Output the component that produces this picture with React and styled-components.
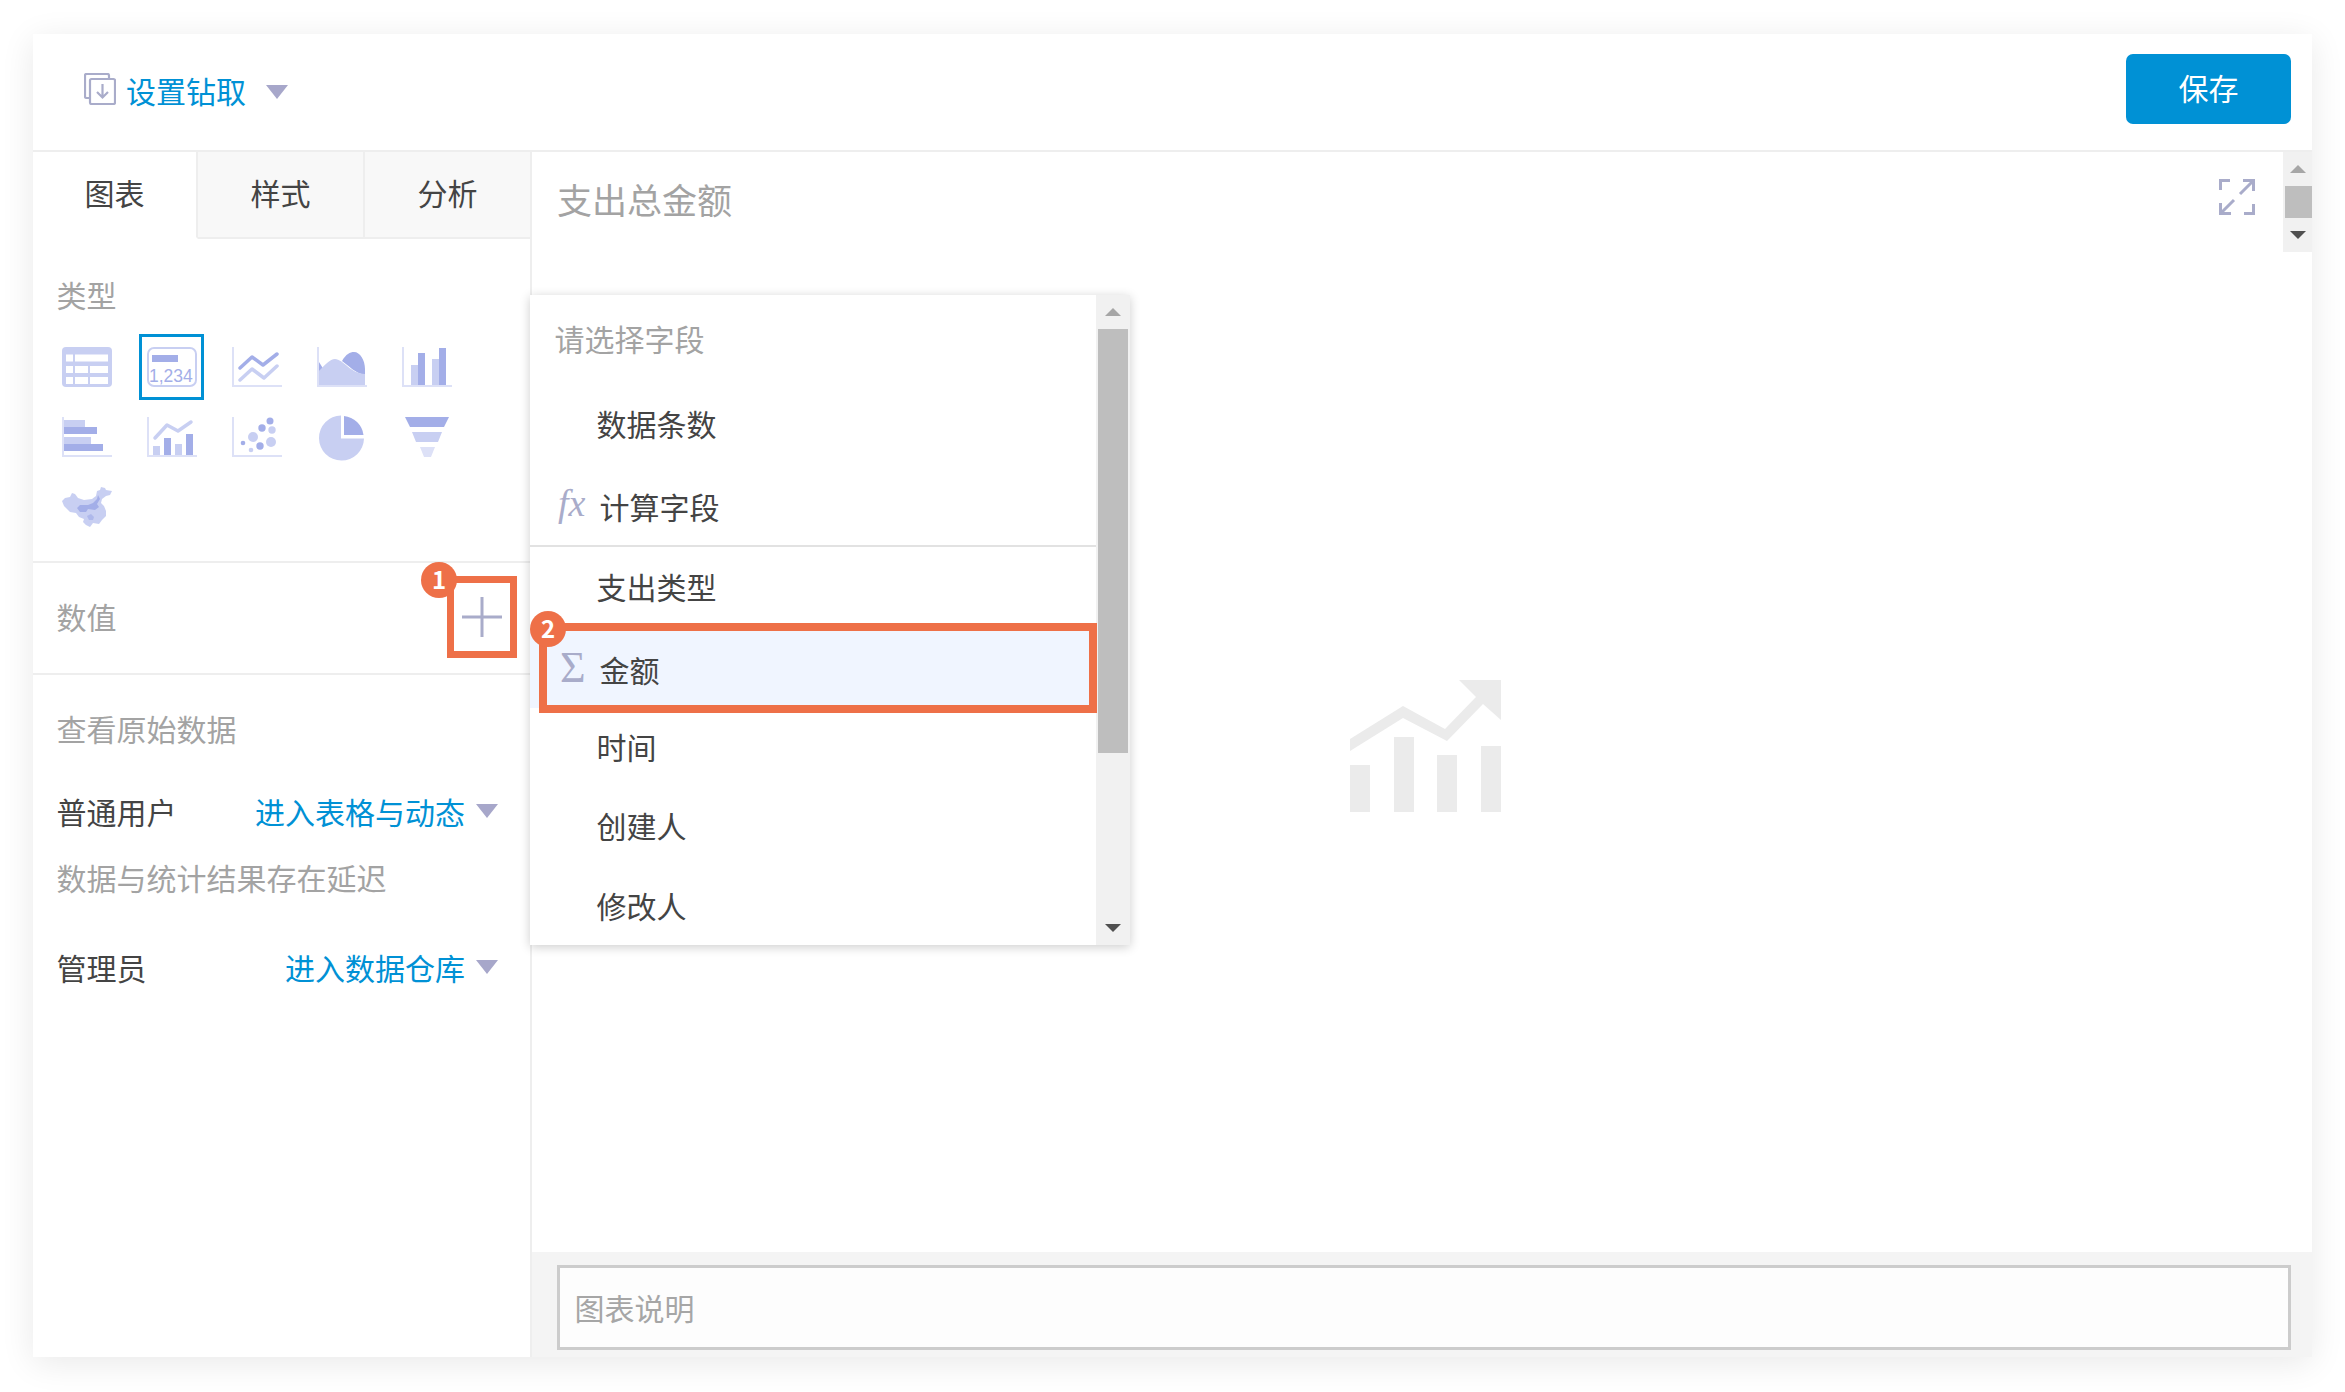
import styled, { createGlobalStyle } from "styled-components"

const GlobalStyle = createGlobalStyle`
  html, body {
    margin: 0;
    padding: 0;
    background: #fff;
  }
  * {
    box-sizing: border-box;
  }
`

const LIGHT = "#c8cff2"
const DARK = "#a3aee8"
const AXIS = "#dde1f7"
const ORANGE = "#ee7048"
const BLUE = "#0091d5"

const Page = styled.div`
  width: 2345px;
  height: 1392px;
  padding: 34px 33px;
  font-family: "Noto Sans CJK SC", "Liberation Sans", sans-serif;
  font-size: 30px;
  color: #444;
`

const Card = styled.div`
  width: 2279px;
  height: 1323px;
  display: flex;
  flex-direction: column;
  background: #fff;
  box-shadow: 0 6px 32px rgba(0, 0, 0, 0.09);
`

const Header = styled.header`
  height: 118px;
  flex: none;
  display: flex;
  align-items: center;
  padding: 0 21px 0 51px;
  border-bottom: 2px solid #eee;
`

const DrillLink = styled.div`
  display: flex;
  align-items: center;
  margin-top: -5px;
  color: ${BLUE};
  line-height: 40px;
`

const DrillIcon = styled.svg`
  width: 32px;
  height: 32px;
  margin: -1px 10px 0 0;
`

const Caret = styled.span`
  display: inline-block;
  width: 0;
  height: 0;
  margin-left: ${(p) => p.$gap || 0}px;
  border-left: 11px solid transparent;
  border-right: 11px solid transparent;
  border-top: 14px solid #a7a7ca;
`

const DrillCaret = styled(Caret)`
  margin-top: 5px;
`

const SaveButton = styled.button`
  width: 165px;
  height: 70px;
  margin: 0 0 6px auto;
  background: ${BLUE};
  color: #fff;
  border: none;
  border-radius: 7px;
  font: inherit;
  padding: 0 0 5px;
`

const Body = styled.div`
  flex: 1;
  min-height: 0;
  display: flex;
`

const Sidebar = styled.aside`
  width: 499px;
  flex: none;
  border-right: 2px solid #eee;
`

const Tabs = styled.div`
  display: flex;
  height: 87px;
`

const Tab = styled.div`
  width: ${(p) => p.$width}px;
  display: flex;
  align-items: center;
  justify-content: center;
  padding-bottom: 5px;
  background: ${(p) => (p.$active ? "#fff" : "#f8f8f8")};
  border-right: 2px solid #eee;
  border-bottom: 2px solid ${(p) => (p.$active ? "#fff" : "#eee")};
  &:last-child {
    border-right: none;
  }
`

const TypeSection = styled.section`
  padding: 40px 0 21px 21px;
  border-bottom: 2px solid #eee;
`

const Label = styled.div`
  color: #a3a3a3;
  line-height: 30px;
  margin-left: 2.5px;
`

const TypeGrid = styled.div`
  display: grid;
  grid-template-columns: repeat(5, 65px);
  grid-auto-rows: 66px;
  gap: 4px 20px;
  margin-top: 25px;
`

const TypeCell = styled.div`
  display: flex;
  align-items: center;
  justify-content: center;
  border: 3px solid ${(p) => (p.$selected ? BLUE : "transparent")};
  svg {
    width: 50px;
    height: 40px;
    flex: none;
  }
`

const ValueRow = styled.section`
  height: 112px;
  display: flex;
  align-items: center;
  justify-content: space-between;
  padding: 0 13px 2px 23.5px;
  border-bottom: 2px solid #eee;
  color: #a3a3a3;
`

const ValueLabel = styled.span`
  margin-top: -3px;
`

const PlusBox = styled.div`
  position: relative;
  width: 70px;
  height: 82px;
  display: flex;
  align-items: center;
  justify-content: center;
  border: 7px solid ${ORANGE};
  svg {
    width: 42px;
    height: 42px;
  }
`

const Badge = styled.span`
  position: absolute;
  left: ${(p) => p.$left}px;
  top: ${(p) => p.$top}px;
  width: 36px;
  height: 36px;
  border-radius: 50%;
  background: ${ORANGE};
  color: #fff;
  font-size: 24px;
  font-weight: 700;
  line-height: 34px;
  text-align: center;
  z-index: 2;
`

const DataSection = styled.section`
  padding: 33px 32px 0 23.5px;
`

const Line = styled.div`
  display: flex;
  align-items: center;
  justify-content: space-between;
  line-height: 40px;
  margin-top: ${(p) => p.$top || 0}px;
  color: ${(p) => (p.$muted ? "#a3a3a3" : "#444")};
`

const LinkGroup = styled.div`
  display: flex;
  align-items: center;
  color: ${BLUE};
`

const Main = styled.main`
  position: relative;
  flex: 1;
  min-width: 0;
  display: flex;
  flex-direction: column;
`

const TitleRow = styled.div`
  height: 100px;
  flex: none;
  display: flex;
  align-items: flex-start;
  padding-left: 25px;
`

const Title = styled.h2`
  margin: 25px 0 0;
  font-size: 35px;
  font-weight: 400;
  line-height: 44px;
  color: #a3a3a3;
`

const ExpandIcon = styled.svg`
  width: 36px;
  height: 36px;
  margin: 27px 28px 0 auto;
`

const Track = styled.div`
  width: ${(p) => p.$width}px;
  align-self: stretch;
  flex: none;
  display: flex;
  flex-direction: column;
  background: #f1f1f1;
`

const ArrowCell = styled.div`
  height: 34px;
  flex: none;
  display: flex;
  align-items: center;
  justify-content: center;
  margin-top: ${(p) => (p.$end ? "auto" : 0)};
`

const Arrow = styled.span`
  width: 0;
  height: 0;
  border-left: 8px solid transparent;
  border-right: 8px solid transparent;
  border-bottom: ${(p) => (p.$down ? "none" : "8px solid #a6a6a6")};
  border-top: ${(p) => (p.$down ? "8px solid #505050" : "none")};
`

const Thumb = styled.div`
  height: ${(p) => p.$height}px;
  flex: none;
  margin: ${(p) => p.$margin};
  background: #bebebe;
`

const ChartArea = styled.div`
  flex: 1;
  min-height: 0;
  display: flex;
  align-items: center;
  justify-content: center;
  padding: 0 2px 12px 9px;
`

const EmptyChart = styled.svg`
  width: 151px;
  height: 132px;
`

const Footer = styled.div`
  height: 105px;
  flex: none;
  padding: 13px 21px 7px 25px;
  background: #f4f4f4;
`

const CaptionInput = styled.div`
  height: 85px;
  display: flex;
  align-items: center;
  padding: 0 0 2px 14.5px;
  background: #fdfdfd;
  border: 3px solid #ccc;
  color: #a6a6a6;
`

const Menu = styled.div`
  position: absolute;
  left: -2px;
  top: 143px;
  width: 600px;
  height: 650px;
  display: flex;
  background: #fff;
  box-shadow: 0 2px 10px rgba(0, 0, 0, 0.2);
  z-index: 3;
`

const MenuList = styled.div`
  flex: 1;
  min-width: 0;
`

const MenuHint = styled.div`
  height: 90px;
  padding: 0 0 4px 24.5px;
  display: flex;
  align-items: center;
  color: #a3a3a3;
`

const MenuItem = styled.div`
  position: relative;
  height: ${(p) => p.$height}px;
  display: flex;
  align-items: center;
  padding: ${(p) => (p.$hasIcon ? "3px 0 0 28px" : "0 0 2px 66.5px")};
  background: ${(p) => (p.$active ? "#f0f5ff" : "transparent")};
  border-bottom: ${(p) => (p.$split ? "2px solid #e2e2e2" : "none")};
`

const ItemGlyph = styled.span`
  width: 41.5px;
  flex: none;
  padding-left: ${(p) => p.$indent || 0}px;
  font-family: "Liberation Serif", serif;
  font-style: ${(p) => (p.$italic ? "italic" : "normal")};
  font-size: ${(p) => p.$size}px;
  line-height: 30px;
  margin-top: ${(p) => p.$top}px;
  color: #a9acca;
`

const HighlightBox = styled.div`
  position: absolute;
  left: 9px;
  right: -1px;
  top: -4px;
  bottom: -5px;
  border: 8px solid ${ORANGE};
`

const TableIcon = () => (
  <svg viewBox="0 0 50 40">
    <rect width="50" height="40" rx="4" fill={LIGHT} />
    {[8, 20, 31].map((y, r) => (
      <g key={y} fill="#fff">
        {r === 0 ? (
          <>
            <rect x="4" y={y - 0.5} width="7" height="7" />
            <rect x="13" y={y - 0.5} width="33" height="7" />
          </>
        ) : (
          <>
            <rect x="4" y={y - 1} width="7" height="7" />
            <rect x="13" y={y - 1} width="13" height="7" />
            <rect x="28" y={y - 1} width="18" height="7" />
          </>
        )}
      </g>
    ))}
  </svg>
)

const NumberIcon = () => (
  <svg viewBox="0 0 50 40">
    <rect x="1" y="1" width="48" height="38" rx="6" fill="none" stroke={LIGHT} strokeWidth="2" />
    <rect x="5" y="8" width="26" height="7" fill={DARK} />
    <text x="2" y="35" fontFamily="Liberation Sans, sans-serif" fontSize="17.5" fill={DARK}>1,234</text>
  </svg>
)

const Axis = () => <path d="M1 0V39H50" fill="none" stroke={AXIS} strokeWidth="2" />

const LineIcon = () => (
  <svg viewBox="0 0 50 40">
    <Axis />
    <path d="M8 21L20 10L31 18L45 7" fill="none" stroke={DARK} strokeWidth="3.5" strokeLinecap="round" strokeLinejoin="round" />
    <path d="M8 33L20 22L32 31L45 19" fill="none" stroke={LIGHT} strokeWidth="3.5" strokeLinecap="round" strokeLinejoin="round" />
  </svg>
)

const AreaIcon = () => (
  <svg viewBox="0 0 50 40">
    <Axis />
    <path d="M2 15L7 23L2 24Z" fill={DARK} />
    <path d="M25 14C29 7 33 5 37 5C43 5 48 13 48 22V28C38 26 32 19 25 14Z" fill={DARK} />
    <path d="M2 24C8 18 13 12 18 12C26 12 34 27 48 27V38H2Z" fill={LIGHT} />
  </svg>
)

const BarIcon = () => (
  <svg viewBox="0 0 50 40">
    <Axis />
    <rect x="9" y="18" width="7" height="20" fill={LIGHT} />
    <rect x="16" y="6" width="7" height="32" fill={DARK} />
    <rect x="30" y="12" width="7" height="26" fill={LIGHT} />
    <rect x="37" y="1" width="7" height="37" fill={DARK} />
  </svg>
)

const HBarIcon = () => (
  <svg viewBox="0 0 50 40">
    <Axis />
    <rect x="2" y="3" width="21" height="7" fill={LIGHT} />
    <rect x="2" y="10" width="33" height="7" fill={DARK} />
    <rect x="2" y="20" width="27" height="7" fill={LIGHT} />
    <rect x="2" y="27" width="39" height="7" fill={DARK} />
  </svg>
)

const ComboIcon = () => (
  <svg viewBox="0 0 50 40">
    <Axis />
    <rect x="6" y="29" width="7" height="9" fill={LIGHT} />
    <rect x="17" y="21" width="7" height="17" fill={DARK} />
    <rect x="28" y="27" width="7" height="11" fill={LIGHT} />
    <rect x="39" y="17" width="7" height="21" fill={DARK} />
    <path d="M8 21L20 8L31 14L44 5" fill="none" stroke={LIGHT} strokeWidth="3.5" strokeLinecap="round" strokeLinejoin="round" />
  </svg>
)

const ScatterIcon = () => (
  <svg viewBox="0 0 50 40">
    <Axis />
    <circle cx="38" cy="4" r="3.5" fill={DARK} />
    <circle cx="30" cy="11" r="3.7" fill={DARK} />
    <circle cx="40" cy="13" r="3.7" fill={LIGHT} />
    <circle cx="21" cy="20" r="5" fill={LIGHT} />
    <circle cx="39" cy="25" r="5" fill={LIGHT} />
    <circle cx="28" cy="29" r="3.7" fill={DARK} />
    <circle cx="11" cy="26" r="2.3" fill={DARK} />
    <circle cx="19" cy="33" r="2.3" fill={LIGHT} />
  </svg>
)

const PieIcon = () => (
  <svg viewBox="0 0 50 40" style={{ overflow: "visible" }}>
    <path d="M24 -1.500A22.500 22.500 0 1 0 47 21.500H24Z" fill={LIGHT} />
    <path d="M27 -1A22 22 0 0 1 46.500 18H27Z" fill={DARK} />
  </svg>
)

const FunnelIcon = () => (
  <svg viewBox="0 0 50 40">
    <path d="M3 0H47L42 10H8Z" fill={DARK} />
    <path d="M10 15H40L36 25H14Z" fill={LIGHT} />
    <path d="M18 30H33L29 40H22Z" fill={AXIS} />
  </svg>
)

const MapIcon = () => (
  <svg viewBox="0 0 50 40">
    <path d="M0 14L3 11L8 10L10 6L13 7L16 11L22 13L30 12L34 9L35 4L38 3L39 0L43 1L44 3L50 4L48 8L44 9L40 12L39 16L42 19L44 24L44 29L40 33L37 37L31 36L28 40L24 38L21 35L22 32L17 30L14 26L8 25L4 21L2 19Z" fill={LIGHT} />
    <path d="M15 21L18 18L26 18L31 16L35 12L36 8L38 12L35 17L37 20L33 23L26 22L24 25L18 25Z" fill={DARK} />
    <path d="M25 29L29 27L32 30L31 33L27 33Z" fill={DARK} opacity="0.7" />
  </svg>
)

const chartTypes = [
  TableIcon, NumberIcon, LineIcon, AreaIcon, BarIcon,
  HBarIcon, ComboIcon, ScatterIcon, PieIcon, FunnelIcon,
  MapIcon,
]

const Scrollbar = ({ width, thumb, margin }) => (
  <Track $width={width}>
    <ArrowCell><Arrow /></ArrowCell>
    <Thumb $height={thumb} $margin={margin} />
    <ArrowCell $end><Arrow $down /></ArrowCell>
  </Track>
)

const App = () => {
  return (
    <>
      <GlobalStyle />
      <Page>
        <Card>
          <Header>
            <DrillLink>
              <DrillIcon viewBox="0 0 32 32" fill="none" stroke="#a9acca" strokeWidth="2.2">
                <path d="M6 25H2.5C1.7 25 1 24.3 1 23.5V2.5C1 1.7 1.7 1 2.5 1H23.5C24.3 1 25 1.7 25 2.5V6" />
                <rect x="6" y="6" width="25" height="25" rx="1.5" />
                <path d="M18.500 11V24M13 19L18.500 24.500L24 19" />
              </DrillIcon>
              设置钻取
              <DrillCaret $gap={20} />
            </DrillLink>
            <SaveButton>保存</SaveButton>
          </Header>
          <Body>
            <Sidebar>
              <Tabs>
                <Tab $width={165} $active>图表</Tab>
                <Tab $width={167}>样式</Tab>
                <Tab $width={165}>分析</Tab>
              </Tabs>
              <TypeSection>
                <Label>类型</Label>
                <TypeGrid>
                  {chartTypes.map((Icon, i) => (
                    <TypeCell key={i} $selected={i === 1}>
                      <Icon />
                    </TypeCell>
                  ))}
                </TypeGrid>
              </TypeSection>
              <ValueRow>
                <ValueLabel>数值</ValueLabel>
                <PlusBox>
                  <Badge $left={-33} $top={-21}>1</Badge>
                  <svg viewBox="0 0 42 42" fill="none" stroke="#a9acca" strokeWidth="3">
                    <path d="M21 1V41M1 21H41" />
                  </svg>
                </PlusBox>
              </ValueRow>
              <DataSection>
                <Line $muted>查看原始数据</Line>
                <Line $top={43}>
                  普通用户
                  <LinkGroup>进入表格与动态<Caret $gap={11} /></LinkGroup>
                </Line>
                <Line $top={26} $muted>数据与统计结果存在延迟</Line>
                <Line $top={50}>
                  管理员
                  <LinkGroup>进入数据仓库<Caret $gap={11} /></LinkGroup>
                </Line>
              </DataSection>
            </Sidebar>
            <Main>
              <TitleRow>
                <Title>支出总金额</Title>
                <ExpandIcon viewBox="0 0 36 36" fill="none" stroke="#a9acca" strokeWidth="3">
                  <path d="M11 1.500H1.500V11M25 34.500H34.500V25" />
                  <path d="M34 2L21 15M24 1.500H34.500V12" />
                  <path d="M2 34L15 21M1.500 24V34.500H12" />
                </ExpandIcon>
                <Scrollbar width={29} thumb={32} margin="0 0 0 2px" />
              </TitleRow>
              <ChartArea>
                <EmptyChart viewBox="0 0 151 132" fill="#ebebeb">
                  <rect x="0" y="85" width="20" height="47" />
                  <rect x="44" y="57" width="20" height="75" />
                  <rect x="87" y="75" width="20" height="57" />
                  <rect x="131" y="66" width="20" height="66" />
                  <path d="M0 59L53 26L95 49L126 17L109 0H151V40L133 24L97 61L53 38L0 71Z" />
                </EmptyChart>
              </ChartArea>
              <Footer>
                <CaptionInput>图表说明</CaptionInput>
              </Footer>
              <Menu>
                <MenuList>
                  <MenuHint>请选择字段</MenuHint>
                  <MenuItem $height={78}>数据条数</MenuItem>
                  <MenuItem $height={84} $hasIcon $split>
                    <ItemGlyph $italic $size={38} $top={-6}>fx</ItemGlyph>
                    计算字段
                  </MenuItem>
                  <MenuItem $height={80}>支出类型</MenuItem>
                  <MenuItem $height={81} $hasIcon $active>
                    <ItemGlyph $size={44} $top={-3} $indent={2}>Σ</ItemGlyph>
                    金额
                    <HighlightBox />
                    <Badge $left={0} $top={-16}>2</Badge>
                  </MenuItem>
                  <MenuItem $height={78}>时间</MenuItem>
                  <MenuItem $height={80}>创建人</MenuItem>
                  <MenuItem $height={79}>修改人</MenuItem>
                </MenuList>
                <Scrollbar width={34} thumb={424} margin="0 2px" />
              </Menu>
            </Main>
          </Body>
        </Card>
      </Page>
    </>
  )
}

export default App
